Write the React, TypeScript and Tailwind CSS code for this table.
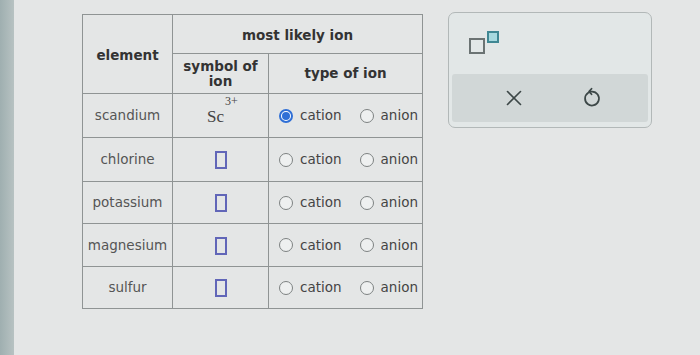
import { X } from 'lucide-react';

type Row = {
  name: string;
  symbol?: boolean; // true = answered Sc3+
  picked?: 'cation' | 'anion';
  h: string;
};

const rows: Row[] = [
  { name: 'scandium', symbol: true, picked: 'cation', h: 'h-[44px]' },
  { name: 'chlorine', h: 'h-[44px]' },
  { name: 'potassium', h: 'h-[42px]' },
  { name: 'magnesium', h: 'h-[43px]' },
  { name: 'sulfur', h: 'h-[42px]' },
];

const Radio = ({ on }: { on?: boolean }) =>
  on ? (
    <span className="inline-flex h-[14px] w-[14px] items-center justify-center rounded-full border-2 border-[#2f6fd6] bg-white">
      <span className="h-[8px] w-[8px] rounded-full bg-[#2f6fd6]" />
    </span>
  ) : (
    <span className="inline-block h-[14px] w-[14px] rounded-full border border-[#7d8282] bg-[#eef0f0]" />
  );

const App = () => {
  return (
    <div
      className="flex h-[355px] w-[700px] bg-[#e4e6e6] text-[13.5px] text-[#444]"
      style={{ fontFamily: '"DejaVu Sans", Verdana, sans-serif' }}
    >
      {/* dark edge of the screen photo */}
      <div className="w-[14px] shrink-0 bg-gradient-to-r from-[#9fafb0] to-[#b7c2c2]" />

      <div className="flex flex-1 items-start gap-[25px] pl-[68px] pt-[14px]">
        <table className="table-fixed border-collapse border border-[#8f9494] text-center">
          <colgroup>
            <col className="w-[90px]" />
            <col className="w-[96px]" />
            <col className="w-[154px]" />
          </colgroup>
          <thead className="font-bold text-[#333]">
            <tr className="h-[39px]">
              <th rowSpan={2} className="border border-[#8f9494] pt-[2px]">
                element
              </th>
              <th colSpan={2} className="border border-[#8f9494] pt-[2px]">
                most likely ion
              </th>
            </tr>
            <tr className="h-[40px]">
              <th className="border border-[#8f9494] leading-[15px]">
                symbol of
                <br />
                ion
              </th>
              <th className="border border-[#8f9494]">type of ion</th>
            </tr>
          </thead>
          <tbody>
            {rows.map((r) => (
              <tr key={r.name} className={r.h}>
                <td className="border border-[#8f9494] px-0 text-[#555]">{r.name}</td>
                <td className="border border-[#8f9494]">
                  {r.symbol ? (
                    <span
                      className="relative -ml-[10px] inline-block pt-[4px] text-[17px] leading-none text-[#444]"
                      style={{ fontFamily: '"Liberation Serif", "Times New Roman", serif' }}
                    >
                      Sc
                      <span className="absolute -top-[9px] left-[18px] text-[12px] leading-none">3+</span>
                    </span>
                  ) : (
                    <span className="inline-block h-[18px] w-[12px] border-2 border-[#6166b8] align-middle" />
                  )}
                </td>
                <td className="border border-[#8f9494]">
                  <div className="flex items-center pl-[10px]">
                    <Radio on={r.picked === 'cation'} />
                    <span className="ml-[7px] text-[#444]">cation</span>
                    <span className="ml-[18px]" />
                    <Radio on={r.picked === 'anion'} />
                    <span className="ml-[7px] text-[#444]">anion</span>
                  </div>
                </td>
              </tr>
            ))}
          </tbody>
        </table>

        <div className="mt-[-2px] flex h-[116px] w-[204px] flex-col rounded-[7px] border border-[#b2b8b8] bg-[#e2e7e7] px-[3px] pb-[5px] pt-[18px]">
          <div className="flex h-[40px] items-start pl-[17px]">
            <span className="mt-[7px] inline-block h-[16px] w-[16px] border-2 border-[#6b7373]" />
            <span className="ml-[2px] inline-block h-[12px] w-[12px] border-2 border-[#3f8793] bg-[#a7d9df]" />
          </div>
          <div className="mt-auto flex h-[48px] items-center justify-around rounded-[3px] bg-[#d1d7d7] px-[20px]">
            <X className="ml-[2px] h-[26px] w-[26px] text-[#3c4747]" strokeWidth={1.5} />
            <svg width="20" height="22" viewBox="0 0 18 20" fill="none" stroke="#3c4747" strokeWidth="1.6" strokeLinecap="round" strokeLinejoin="round">
              <path d="M6.5 5.2 A6.3 6.3 0 1 0 10 4.2 L8 4.2" />
              <path d="M9.5 1.6 L7.2 4.2 L9.5 6.6" />
            </svg>
          </div>
        </div>
      </div>
    </div>
  );
};

export default App;
